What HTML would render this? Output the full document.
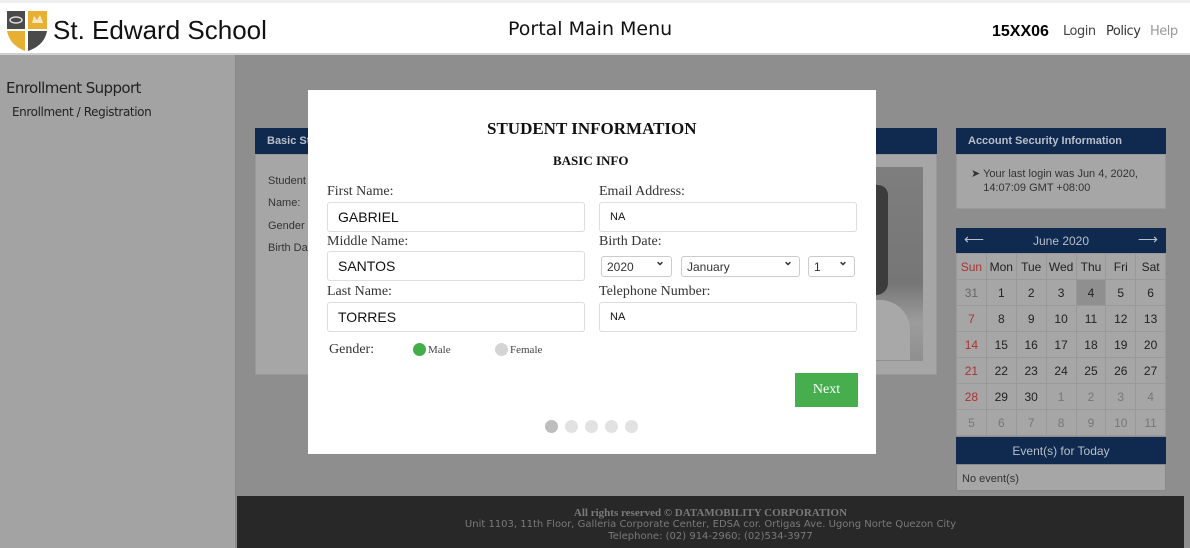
<!DOCTYPE html>
<html><head><meta charset="utf-8"><style>
*{box-sizing:border-box;margin:0;padding:0}
body{width:1190px;height:548px;overflow:hidden;position:relative;background:#8e8e8e;font-family:"Liberation Sans",sans-serif}
.abs{position:absolute}
.hdr{left:0;top:0;width:1190px;height:55px;background:#fff;border-top:3px solid #eee;border-bottom:2px solid #d0d0d0}
.side{left:0;top:55px;width:236px;height:493px;background:#a3a3a3;border-right:1px solid #888}
.navy{background:#0f2a4e;color:#b8bfca;font-weight:bold;font-size:11px}
.modal{left:308px;top:90px;width:568px;height:364px;background:#fff;font-family:"Liberation Serif",serif;color:#222}
.lbl{font-size:14px;color:#333}
.inp{border:1px solid #ddd;border-radius:3px;background:#fff;height:30px;font-size:14px;padding:6px 10px;font-family:"Liberation Sans",sans-serif;color:#111}
.sel{border:1px solid #ccc;border-radius:3px;height:21px;font-size:12px;padding:3px 5px;font-family:"Liberation Sans",sans-serif;color:#333}
.sel:after{content:"⌄";position:absolute;right:6px;top:-3px;font-weight:bold}
table{border-collapse:collapse}
td{width:30px;height:26px;text-align:center;font-size:12px;color:#222;border:1px solid #999;background:#a6a6a6}
.dot{width:13px;height:13px;border-radius:50%;background:#e2e2e2;position:absolute;top:330px}
</style></head><body>
<div class="abs hdr">
 <svg class="abs" style="left:5px;top:6px" width="44" height="44" viewBox="0 0 44 44">
  <path d="M2 2H20V20H2Z" fill="#4a4a4a"/><path d="M23 2H42V20H23Z" fill="#e8b033"/>
  <path d="M2 22H20V42C10 38 4 32 2 22Z" fill="#e8b033"/><path d="M23 22H42C40 32 34 38 23 42Z" fill="#4a4a4a"/>
  <ellipse cx="11" cy="11" rx="6" ry="3" fill="none" stroke="#ddd" stroke-width="1.5"/>
  <path d="M27 14L29 7L32 11L35 6L38 14Z" fill="#fff" opacity=".7"/>
 </svg>
 <div class="abs" style="left:53px;top:12px;font-size:26px;color:#111;font-family:'Liberation Sans',sans-serif">St. Edward School</div>
 <div class="abs" style="left:508px;top:15px;font-size:19px;color:#111;font-family:'DejaVu Sans',sans-serif">Portal Main Menu</div>
 <div class="abs" style="left:992px;top:20px;font-size:16px;font-weight:bold;color:#000">15XX06</div>
 <div class="abs" style="left:1063px;top:21px;font-size:13px;color:#444;font-family:'DejaVu Sans',sans-serif;letter-spacing:-0.5px">Login</div>
 <div class="abs" style="left:1106px;top:21px;font-size:13px;color:#333;font-family:'DejaVu Sans',sans-serif;letter-spacing:-0.5px">Policy</div>
 <div class="abs" style="left:1150px;top:21px;font-size:13px;color:#999;font-family:'DejaVu Sans',sans-serif;letter-spacing:-0.5px">Help</div>
</div>
<div class="abs side">
 <div class="abs" style="left:6px;top:24px;font-size:15px;color:#222;font-family:'DejaVu Sans',sans-serif;letter-spacing:-0.6px">Enrollment Support</div>
 <div class="abs" style="left:12px;top:50px;font-size:12px;color:#222;font-family:'DejaVu Sans',sans-serif;letter-spacing:-0.4px">Enrollment / Registration</div>
</div>
<div class="abs" style="left:237px;top:55px;width:953px;height:441px;background:#8e8e8e"></div>
<!-- left panel -->
<div class="abs navy" style="left:255px;top:128px;width:682px;height:26px;padding:7px 12px">Basic Student Information</div>
<div class="abs" style="left:255px;top:154px;width:682px;height:221px;background:#a6a6a6;border:1px solid #999;font-size:11px;color:#333">
 <div class="abs" style="left:12px;top:20px">Student</div><div class="abs" style="left:12px;top:42px">Name:</div>
 <div class="abs" style="left:12px;top:65px">Gender</div><div class="abs" style="left:12px;top:87px">Birth Date</div>
</div>
<div class="abs" style="left:870px;top:167px;width:53px;height:194px;background:linear-gradient(180deg,#7e7e7e,#767676 60%,#9c9c9c 80%,#8f8f8f)"></div>
<div class="abs" style="left:870px;top:185px;width:18px;height:110px;background:#3c3c3c;border-radius:0 10px 12px 0"></div>
<div class="abs" style="left:870px;top:300px;width:40px;height:60px;background:#a8a8a8;border-radius:0 30px 0 0"></div>
<!-- right -->
<div class="abs navy" style="left:956px;top:128px;width:210px;height:26px;padding:7px 12px">Account Security Information</div>
<div class="abs" style="left:956px;top:154px;width:210px;height:55px;background:#a6a6a6;border:1px solid #999;font-size:11px;color:#333;padding:12px 8px 0 14px;line-height:14px">➤ Your last login was Jun 4, 2020, <br>&nbsp;&nbsp;&nbsp;&nbsp;14:07:09 GMT +08:00</div>
<div class="abs navy" style="left:956px;top:228px;width:210px;height:25px;font-weight:normal;font-size:12px;text-align:center;padding-top:6px">
 <span class="abs" style="left:8px;top:3px;font-size:14px">⟵</span>June 2020<span class="abs" style="right:8px;top:3px;font-size:14px">⟶</span></div>
<table class="abs" style="left:956px;top:253px;width:210px">
<tr><td style="color:#a33">Sun</td><td>Mon</td><td>Tue</td><td>Wed</td><td>Thu</td><td>Fri</td><td>Sat</td></tr>
<tr><td style="color:#666">31</td><td>1</td><td>2</td><td>3</td><td style="background:#8f8f8f">4</td><td>5</td><td>6</td></tr>
<tr><td style="color:#a33">7</td><td>8</td><td>9</td><td>10</td><td>11</td><td>12</td><td>13</td></tr>
<tr><td style="color:#a33">14</td><td>15</td><td>16</td><td>17</td><td>18</td><td>19</td><td>20</td></tr>
<tr><td style="color:#a33">21</td><td>22</td><td>23</td><td>24</td><td>25</td><td>26</td><td>27</td></tr>
<tr><td style="color:#a33">28</td><td>29</td><td>30</td><td style="color:#777">1</td><td style="color:#777">2</td><td style="color:#777">3</td><td style="color:#777">4</td></tr>
<tr><td style="color:#777">5</td><td style="color:#777">6</td><td style="color:#777">7</td><td style="color:#777">8</td><td style="color:#777">9</td><td style="color:#777">10</td><td style="color:#777">11</td></tr>
</table>
<div class="abs navy" style="left:956px;top:437px;width:210px;height:27px;font-weight:normal;font-size:12px;text-align:center;padding-top:7px">Event(s) for Today</div>
<div class="abs" style="left:956px;top:464px;width:210px;height:27px;background:#a6a6a6;border:1px solid #888;font-size:11px;color:#333;padding:8px 5px">No event(s)</div>
<!-- footer -->
<div class="abs" style="left:237px;top:496px;width:947px;height:52px;background:#282828;color:#7a7a7a;font-size:10px;text-align:center;line-height:12px;padding-top:11px;font-family:'DejaVu Sans',sans-serif">
 <div style="font-weight:bold;font-family:'Liberation Serif',serif;font-size:11px">All rights reserved © DATAMOBILITY CORPORATION</div>
 <div>Unit 1103, 11th Floor, Galleria Corporate Center, EDSA cor. Ortigas Ave. Ugong Norte Quezon City</div>
 <div>Telephone: (02) 914-2960; (02)534-3977</div>
</div>
<!-- modal -->
<div class="abs modal">
 <div class="abs" style="left:179px;top:29px;font-size:17px;font-weight:bold;color:#111">STUDENT INFORMATION</div>
 <div class="abs" style="left:245px;top:63px;font-size:13px;font-weight:bold;color:#111">BASIC INFO</div>
 <div class="abs lbl" style="left:19px;top:94px">First Name:</div>
 <div class="abs inp" style="left:19px;top:112px;width:258px">GABRIEL</div>
 <div class="abs lbl" style="left:19px;top:144px">Middle Name:</div>
 <div class="abs inp" style="left:19px;top:161px;width:258px">SANTOS</div>
 <div class="abs lbl" style="left:19px;top:194px">Last Name:</div>
 <div class="abs inp" style="left:19px;top:212px;width:258px">TORRES</div>
 <div class="abs lbl" style="left:21px;top:252px">Gender:</div>
 <div class="abs" style="left:105px;top:253px;width:13px;height:13px;border-radius:50%;background:#43ad4a"></div>
 <div class="abs" style="left:120px;top:254px;font-size:11px;color:#444">Male</div>
 <div class="abs" style="left:187px;top:253px;width:13px;height:13px;border-radius:50%;background:#d4d4d4"></div>
 <div class="abs" style="left:202px;top:254px;font-size:11px;color:#444">Female</div>
 <div class="abs lbl" style="left:291px;top:94px">Email Address:</div>
 <div class="abs inp" style="left:291px;top:112px;width:258px;font-size:11px;padding-top:8px">NA</div>
 <div class="abs lbl" style="left:291px;top:144px">Birth Date:</div>
 <div class="abs sel" style="left:293px;top:166px;width:71px">2020</div>
 <div class="abs sel" style="left:373px;top:166px;width:119px">January</div>
 <div class="abs sel" style="left:500px;top:166px;width:47px">1</div>
 <div class="abs lbl" style="left:291px;top:194px">Telephone Number:</div>
 <div class="abs inp" style="left:291px;top:212px;width:258px;font-size:11px;padding-top:8px">NA</div>
 <div class="abs" style="left:487px;top:283px;width:63px;height:34px;background:#46ae4d;color:#fff;font-size:14px;text-align:center;line-height:34px">Next</div>
 <div class="dot" style="left:237px;background:#bdbdbd"></div>
 <div class="dot" style="left:257px"></div>
 <div class="dot" style="left:277px"></div>
 <div class="dot" style="left:297px"></div>
 <div class="dot" style="left:317px"></div>
</div>
</body></html>
